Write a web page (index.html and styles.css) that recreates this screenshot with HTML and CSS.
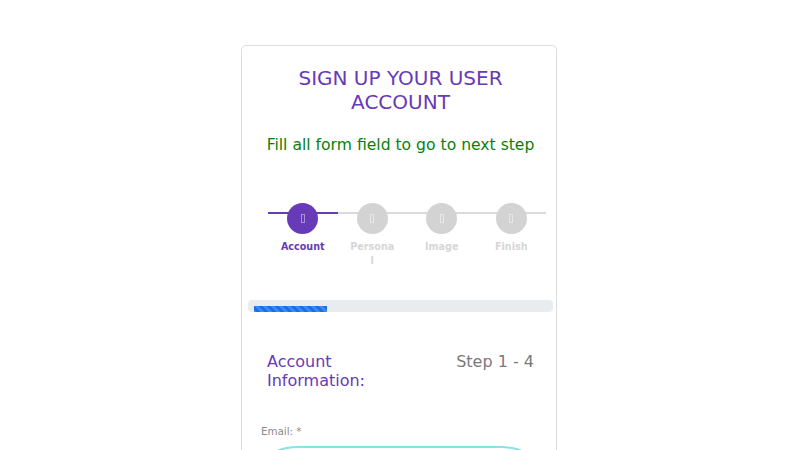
FILE: index.html
```html
<!DOCTYPE html>
<html lang="en">
<head>
<meta charset="utf-8">
<title>Sign up</title>
<link rel="stylesheet" href="styles.css">
</head>
<body>
<div class="card">
  <h2 class="title">SIGN UP YOUR USER ACCOUNT</h2>
  <p class="subtitle">Fill all form field to go to next step</p>
  <ul class="steps">
    <li class="step active"><span class="dot"><span class="ico"></span></span><span class="label">Account</span></li>
    <li class="step"><span class="dot"><span class="ico"></span></span><span class="label">Personal</span></li>
    <li class="step"><span class="dot"><span class="ico"></span></span><span class="label">Image</span></li>
    <li class="step"><span class="dot"><span class="ico"></span></span><span class="label">Finish</span></li>
  </ul>
  <div class="progress"><div class="bar" style="width:73px"></div></div>
  <div class="head-row">
    <h3 class="fs-title">Account Information:</h3>
    <h3 class="fs-step">Step 1 - 4</h3>
  </div>
  <label class="field-label">Email: *</label>
  <div class="input"></div>
</div>
</body>
</html>
```
FILE: styles.css
```css
html, body {
  margin: 0;
  padding: 0;
  background: #fff;
  font-family: "DejaVu Sans", Verdana, sans-serif;
}
.card {
  box-sizing: border-box;
  width: 316px;
  margin: 45px 0 0 241px;
  border: 1px solid #dedede;
  border-bottom: none;
  border-radius: 5px 5px 0 0;
  height: 420px;
  overflow: hidden;
}
.title {
  margin: 20px 0 0;
  padding: 0 30px 0 33px;
  font-size: 20px;
  line-height: 24px;
  font-weight: normal;
  color: #673ab7;
  text-align: center;
}
.subtitle {
  margin: 19px 0 0;
  padding-left: 3px;
  font-size: 15.6px;
  line-height: 24px;
  color: #0a800a;
  text-align: center;
}
.steps {
  list-style: none;
  margin: 46px 0 0 26px;
  padding: 0;
  width: 278px;
  display: flex;
}
.step {
  flex: 1;
  display: flex;
  flex-direction: column;
  align-items: center;
  background: linear-gradient(#dadada, #dadada) no-repeat 0 9px / 100% 2px;
}
.step.active {
  background-image: linear-gradient(#673ab7, #673ab7);
}
.dot {
  width: 31px;
  height: 31px;
  border-radius: 50%;
  background: #d3d3d3;
  display: flex;
  align-items: center;
  justify-content: center;
}
.step.active .dot { background: #673ab7; }
.ico {
  box-sizing: border-box;
  width: 4px;
  height: 9px;
  border: 1px solid rgba(255,255,255,0.45);
}
.label {
  width: 46px;
  margin-top: 6px;
  font-size: 9.6px;
  line-height: 14px;
  font-weight: bold;
  text-align: center;
  color: #d6d6d6;
  word-break: break-all;
}
.step.active .label { color: #673ab7; }
.progress {
  box-sizing: border-box;
  margin: 32px 3px 0 6px;
  height: 12px;
  padding: 6px 0 0 6px;
  background: #e9ecef;
  border-radius: 4px;
}
.bar {
  height: 6px;
  background-color: #1a6fe8;
  background-image: linear-gradient(45deg, rgba(255,255,255,.18) 25%, transparent 25%, transparent 50%, rgba(255,255,255,.18) 50%, rgba(255,255,255,.18) 75%, transparent 75%, transparent);
  background-size: 8px 8px;
}
.head-row {
  margin: 41px 22px 0 25px;
  display: flex;
  justify-content: space-between;
  align-items: flex-start;
}
.fs-title, .fs-step {
  margin: 0;
  font-size: 16px;
  line-height: 18.5px;
  font-weight: normal;
}
.fs-title {
  color: #673ab7;
  width: 130px;
}
.fs-step {
  color: #7a7a7a;
  text-align: right;
}
.field-label {
  display: block;
  margin: 34px 0 0 19px;
  font-size: 10.3px;
  line-height: 15px;
  color: #8a8a8a;
}
.input {
  margin: 7px 25px 0 26px;
  height: 45px;
  border: 2px solid #86e3e6;
  border-radius: 30px / 14px;
}
```
